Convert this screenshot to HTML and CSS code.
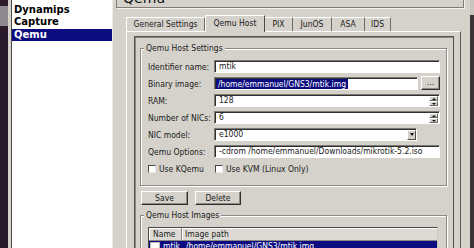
FILE: index.html
```html
<!DOCTYPE html>
<html>
<head>
<meta charset="utf-8">
<link rel="stylesheet" href="styles.css">
</head>
<body>
<div class="desk-left"></div>
<div class="window">
  <div class="sidebar">
    <div class="list">
      <div class="item dim">General</div>
      <div class="item">Dynamips</div>
      <div class="item">Capture</div>
      <div class="item sel">Qemu</div>
    </div>
  </div>
  <div class="main">
    <div class="title">Qemu</div>
    <div class="tabs">
      <div class="tab first w1">General Settings</div>
      <div class="tab active w2">Qemu Host</div>
      <div class="tab w3">PIX</div>
      <div class="tab w4">JunOS</div>
      <div class="tab w5">ASA</div>
      <div class="tab w6">IDS</div>
    </div>
    <div class="pane">
      <div class="frame">
        <fieldset class="group">
          <legend>Qemu Host Settings</legend>
          <div class="form">
            <div class="label">Identifier name:</div>
            <div class="field">mtik</div>

            <div class="label">Binary image:</div>
            <div class="pair">
              <div class="field bin"><span class="hl">/home/emmanuel/GNS3/mtik.img</span></div>
              <div class="btn small">...</div>
            </div>

            <div class="label">RAM:</div>
            <div class="field">128<div class="spin"><div class="up"></div><div class="down"></div></div></div>

            <div class="label">Number of NICs:</div>
            <div class="field">6<div class="spin"><div class="up"></div><div class="down"></div></div></div>

            <div class="label">NIC model:</div>
            <div class="field combo">e1000<div class="drop"><div class="tri"></div></div></div>

            <div class="label">Qemu Options:</div>
            <div class="field">-cdrom /home/emmanuel/Downloads/mikrotik-5.2.iso</div>

            <div class="check"><div class="cb"></div>Use KQemu</div>
            <div class="check second"><div class="cb"></div>Use KVM (Linux Only)</div>
          </div>
        </fieldset>
        <div class="buttons">
          <div class="btn save">Save</div>
          <div class="btn del">Delete</div>
        </div>
        <fieldset class="group images">
          <legend>Qemu Host Images</legend>
          <div class="table">
            <div class="thead">
              <div class="c1">Name</div>
              <div class="c2">Image path</div>
            </div>
            <div class="trow">
              <div class="c1"><div class="box"></div>mtik</div>
              <div class="c2">/home/emmanuel/GNS3/mtik.img</div>
            </div>
          </div>
        </fieldset>
      </div>
    </div>
  </div>
</div>
<div class="desk-right"></div>
</body>
</html>
```
FILE: styles.css
```css
* { box-sizing: border-box; }
html, body { margin: 0; padding: 0; }
body {
  width: 474px;
  height: 248px;
  overflow: hidden;
  display: flex;
  background: #2a1b2b;
  font-family: "DejaVu Sans Condensed", "DejaVu Sans", sans-serif;
  font-size: 8.5px;
  color: #1a1a1a;
}
.desk-left {
  width: 8px;
  flex: none;
  height: 248px;
  background: linear-gradient(#2a1b2b 0 6px, #8f8a90 6px 26px, #2a1b2b 26px);
}
.window {
  width: 462px;
  flex: none;
  height: 248px;
  overflow: hidden;
  display: flex;
  background: #d5d2cc;
  padding-left: 3px;
}
.desk-right {
  flex: 1;
  height: 248px;
  background: linear-gradient(#c9c6c0 0 15px, #3b3437 15px);
}

/* sidebar */
.sidebar {
  width: 102px;
  flex: none;
  height: 248px;
  background: #fff;
  border-left: 1px solid #4d4a47;
  border-right: 1px solid #ecebe8;
  overflow: hidden;
  font-family: "DejaVu Sans", sans-serif;
  font-weight: bold;
  font-size: 10px;
}
.list { margin-top: -9px; }
.item {
  height: 12.5px;
  line-height: 12.5px;
  padding-left: 2px;
  color: #000;
}
.item.dim { color: #9a9a9a; }
.item.sel { background: #0c0c80; color: #fff; }

/* main */
.main {
  width: 357px;
  flex: none;
  height: 248px;
  overflow: hidden;
  padding-left: 3px;
}
.title {
  width: 348px;
  height: 30px;
  margin-top: -22px;
  border: 1px solid #807d78;
  box-shadow: 1px 1px 0 #f4f3f1;
  padding: 10px 0 0 6px;
  font-family: "DejaVu Sans", sans-serif;
  font-size: 14px;
  line-height: 18px;
  color: #111;
}
.tabs {
  display: flex;
  align-items: flex-end;
  margin: 7px 0 0 10px;
  height: 16px;
  position: relative;
  z-index: 1;
}
.tab {
  height: 14px;
  border-top: 1px solid #fff;
  border-right: 1px solid #6f6c67;
  line-height: 13px;
  text-align: center;
  white-space: nowrap;
}
.tab.first { border-left: 1px solid #fff; }
.tab.active {
  height: 17px;
  margin-bottom: -1px;
  border-left: 1px solid #fff;
  border-right: 1px solid #4f4c48;
  background: #d5d2cc;
  line-height: 14px;
}
.w1 { width: 79px; }
.w2 { width: 60px; }
.w3 { width: 28px; }
.w4 { width: 39px; }
.w5 { width: 33px; }
.w6 { width: 26px; }

.pane {
  width: 335px;
  height: 217px;
  margin-left: 10px;
  border: 1px solid;
  border-color: #fff #5a5752 #5a5752 #fff;
  border-bottom: 0;
  padding: 4px 0 0 7px;
  overflow: hidden;
}
.frame {
  width: 320px;
  height: 212px;
  border: 1px solid #55524e;
  border-bottom: 0;
  box-shadow: inset 1px 1px 0 #8c8984;
  padding: 0 0 0 5px;
  overflow: hidden;
}
.group {
  margin: 6px 0 0 0;
  width: 307px;
  min-width: 0;
  padding: 7px 5px 10px 7px;
  border: 1px solid #8c8985;
  box-shadow: inset 1px 1px 0 #fff, 1px 1px 0 #fff;
}
.group legend {
  padding: 0 2px;
  margin-left: -4px;
  line-height: 10px;
  background: #d5d2cc;
}
.form {
  display: grid;
  grid-template-columns: 66px 226px;
  grid-auto-rows: 13px;
  row-gap: 4px;
  align-items: center;
}
.label { white-space: nowrap; }
.field {
  height: 13px;
  background: #fff;
  border: 1px solid;
  border-color: #7d7a75 #fff #fff #7d7a75;
  box-shadow: inset 1px 1px 0 #2f2f2f;
  padding-left: 4px;
  line-height: 11px;
  display: flex;
  align-items: center;
  white-space: nowrap;
  overflow: hidden;
}
.pair {
  display: flex;
  gap: 3px;
  height: 13px;
}
.field.bin { width: 204px; padding-left: 1px; }
.hl {
  background: #0c0c80;
  color: #fff;
  padding: 0 2px;
  line-height: 11px;
  margin-top: 1px;
}
.btn {
  height: 14px;
  background: #d5d2cc;
  border: 1px solid;
  border-color: #fff #2e2e2e #2e2e2e #fff;
  box-shadow: inset -1px -1px 0 #8c8985;
  text-align: center;
  line-height: 12px;
}
.btn.small { width: 19px; height: 14px; margin-top: -1px; line-height: 10px; }
.spin {
  margin-left: auto;
  margin-right: 1px;
  width: 9px;
  height: 10px;
  display: flex;
  flex-direction: column;
  margin-top: 1px;
}
.spin .up, .spin .down {
  flex: 1;
  background: #d5d2cc;
  border: 1px solid;
  border-color: #fff #6f6c67 #6f6c67 #fff;
  position: relative;
}
.spin .up::after, .spin .down::after {
  content: "";
  position: absolute;
  left: 1.5px;
  top: 1px;
  border-left: 2px solid transparent;
  border-right: 2px solid transparent;
}
.spin .up::after { border-bottom: 2px solid #111; }
.spin .down::after { border-top: 2px solid #111; }
.field.combo { width: 203px; }
.drop {
  margin-left: auto;
  width: 9px;
  height: 10px;
  background: #d5d2cc;
  border: 1px solid;
  border-color: #fff #4f4c48 #4f4c48 #fff;
  display: flex;
  align-items: center;
  justify-content: center;
}
.tri {
  border-left: 2.5px solid transparent;
  border-right: 2.5px solid transparent;
  border-top: 3px solid #111;
}
.check {
  display: flex;
  align-items: center;
  gap: 3px;
  white-space: nowrap;
  height: 10px;
}
.check.second { margin-left: 1px; }
.cb {
  width: 8px;
  height: 8px;
  background: #fff;
  border: 1px solid;
  border-color: #4a4845 #e8e6e2 #e8e6e2 #4a4845;
}
.buttons {
  display: flex;
  gap: 7px;
  margin: 5px 0 0 1px;
}
.btn.save { width: 47px; }
.btn.del { width: 46px; }
.group.images { margin-top: 5px; height: 40px; padding-bottom: 0; }
.table {
  width: 290px;
  height: 25px;
  border: 1px solid;
  border-color: #4a4845 #c9c6c0 #c9c6c0 #4a4845;
  border-bottom: 0;
  background: #fff;
  overflow: hidden;
}
.thead {
  display: flex;
  height: 13px;
  background: #dddad5;
  border-bottom: 1px solid #8c8985;
  line-height: 12px;
}
.thead .c1 {
  width: 33px;
  padding-left: 4px;
  border-right: 1px solid #8c8985;
  box-shadow: inset 1px 1px 0 #fff;
}
.thead .c2 {
  flex: 1;
  padding-left: 3px;
  box-shadow: inset 1px 1px 0 #fff;
}
.trow {
  display: flex;
  height: 11px;
  background: #0c0c80;
  color: #fff;
  line-height: 11px;
}
.trow .c1 {
  width: 33px;
  display: flex;
  align-items: flex-start;
  gap: 3px;
  padding-left: 1px;
}
.box {
  width: 10px;
  height: 10px;
  background: #fff;
  border: 1px solid #bdbab5;
  margin-top: 1px;
}
.trow .c2 { flex: 1; padding-left: 4px; }
```
